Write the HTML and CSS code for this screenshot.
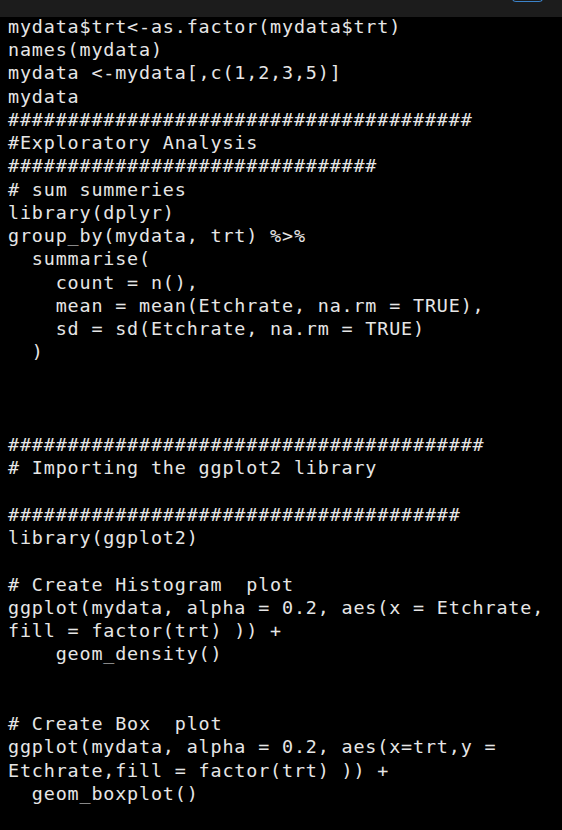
FILE: index.html
```html
<!DOCTYPE html>
<html>
<head>
<meta charset="utf-8">
<link rel="stylesheet" href="styles.css">
</head>
<body>
<div class="topbar"><div class="tab"></div></div>
<pre class="code">mydata$trt&lt;-as.factor(mydata$trt)
names(mydata)
mydata &lt;-mydata[,c(1,2,3,5)]
mydata
#######################################
#Exploratory Analysis
###############################
# sum summeries
library(dplyr)
group_by(mydata, trt) %&gt;%
  summarise(
    count = n(),
    mean = mean(Etchrate, na.rm = TRUE),
    sd = sd(Etchrate, na.rm = TRUE)
  )



########################################
# Importing the ggplot2 library

######################################
library(ggplot2)

# Create Histogram  plot
ggplot(mydata, alpha = 0.2, aes(x = Etchrate,
fill = factor(trt) )) +
    geom_density()


# Create Box  plot
ggplot(mydata, alpha = 0.2, aes(x=trt,y =
Etchrate,fill = factor(trt) )) +
  geom_boxplot()</pre>
</body>
</html>
```
FILE: styles.css
```css
html, body {
  margin: 0;
  padding: 0;
  background: #000;
  width: 562px;
  height: 830px;
  overflow: hidden;
}
.topbar {
  height: 17px;
  background: #1c1c1c;
  display: flex;
  justify-content: flex-end;
  padding-right: 19px;
  box-sizing: border-box;
}
.tab {
  width: 31px;
  height: 4px;
  margin-top: -2px;
  border: 1.5px solid #3b82c8;
  border-top: none;
  border-radius: 0 0 4px 4px;
  box-sizing: border-box;
}
.code {
  margin: -2px 0 0 0;
  padding: 0 0 0 8px;
  font-family: "DejaVu Sans Mono", "Liberation Mono", monospace;
  font-size: 18.4px;
  letter-spacing: 0.84px;
  line-height: 23.24px;
  color: #e6e6e6;
  white-space: pre;
}
```
